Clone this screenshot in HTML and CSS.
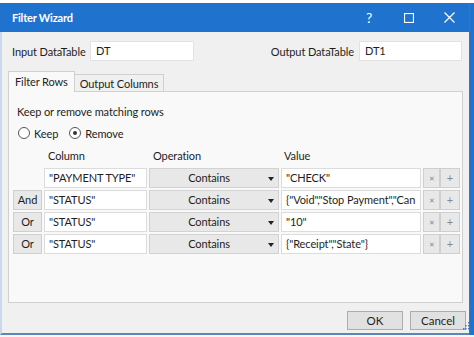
FILE: index.html
```html
<!DOCTYPE html>
<html lang="en">
<head>
    <meta charset="UTF-8">
    <meta name="viewport" content="width=device-width, initial-scale=1.0">
    <title>Filter Wizard</title>
    <link rel="stylesheet" href="styles.css">
</head>
<body>
    <div class="screen">
        <div class="dialog">
            <div class="titlebar">
                <span class="title">Filter Wizard</span>
                <div class="controls">
                    <span class="ctl">?</span>
                    <span class="ctl">
                        <svg width="10" height="10" viewBox="0 0 10 10"><rect x="0.5" y="0.5" width="9" height="9" fill="none" stroke="#fff" stroke-width="1.2"/></svg>
                    </span>
                    <span class="ctl">
                        <svg width="11" height="11" viewBox="0 0 11 11"><path d="M0.5 0.5 L10.5 10.5 M10.5 0.5 L0.5 10.5" stroke="#fff" stroke-width="1.2"/></svg>
                    </span>
                </div>
            </div>
            <div class="content">
                <div class="tables-row">
                    <label class="field-label in-label">Input DataTable</label>
                    <div class="field in-field">DT</div>
                    <div class="spacer"></div>
                    <label class="field-label">Output DataTable</label>
                    <div class="field out-field">DT1</div>
                </div>
                <div class="tabs">
                    <div class="tab active">Filter Rows</div>
                    <div class="tab">Output Columns</div>
                </div>
                <div class="panel">
                    <div class="caption">Keep or remove matching rows</div>
                    <div class="radios">
                        <span class="radio"></span><span class="radio-text">Keep</span>
                        <span class="radio checked"></span><span class="radio-text">Remove</span>
                    </div>
                    <div class="row head">
                        <span></span>
                        <span class="h-col">Column</span>
                        <span class="h-op">Operation</span>
                        <span class="h-val">Value</span>
                    </div>
                    <div class="row">
                        <span></span>
                        <div class="box">"PAYMENT TYPE"</div>
                        <div class="op">Contains<span class="arrow"></span></div>
                        <div class="box">"CHECK"</div>
                        <div class="mini">&#x2715;</div>
                        <div class="mini plus">+</div>
                    </div>
                    <div class="row">
                        <div class="logic">And</div>
                        <div class="box">"STATUS"</div>
                        <div class="op">Contains<span class="arrow"></span></div>
                        <div class="box">{"Void","Stop Payment","Can</div>
                        <div class="mini">&#x2715;</div>
                        <div class="mini plus">+</div>
                    </div>
                    <div class="row">
                        <div class="logic">Or</div>
                        <div class="box">"STATUS"</div>
                        <div class="op">Contains<span class="arrow"></span></div>
                        <div class="box">"10"</div>
                        <div class="mini">&#x2715;</div>
                        <div class="mini plus">+</div>
                    </div>
                    <div class="row">
                        <div class="logic">Or</div>
                        <div class="box">"STATUS"</div>
                        <div class="op">Contains<span class="arrow"></span></div>
                        <div class="box">{"Receipt","State"}</div>
                        <div class="mini">&#x2715;</div>
                        <div class="mini plus">+</div>
                    </div>
                </div>
                <div class="footer">
                    <button class="btn">OK</button>
                    <button class="btn">Cancel</button>
                    <span class="grip">
                        <svg width="7" height="8" viewBox="0 0 7 8" fill="#4a78b0"><rect x="5" y="0" width="1.5" height="1.5"/><rect x="5" y="3" width="1.5" height="1.5"/><rect x="2" y="3" width="1.5" height="1.5"/><rect x="5" y="6" width="1.5" height="1.5"/><rect x="2" y="6" width="1.5" height="1.5"/><rect x="0" y="6" width="1.5" height="1.5"/></svg>
                    </span>
                </div>
            </div>
        </div>
        <div class="side"></div>
    </div>
    <div class="below"></div>
</body>
</html>
```

FILE: styles.css
```css
body {
    margin: 0;
    background: #ffffff;
    font-family: Lato, "Noto Sans", sans-serif;
    font-size: 11px;
    letter-spacing: -0.1px;
    color: #1e1e1e;
    width: 474px;
    height: 337px;
    overflow: hidden;
}
.screen {
    display: flex;
    padding-top: 3px;
}
.dialog {
    width: 467px;
    border-left: 2px solid #c9d8ea;
    border-bottom: 2px solid #5b86b8;
    background: #f0f0f0;
    display: flex;
    flex-direction: column;
}
.side {
    flex: 1;
    background: #1f73cf;
    border-left: 1px solid #5e6f85;
}
.titlebar {
    height: 29px;
    background: #1f73cf;
    display: flex;
    align-items: center;
    color: #fff;
    margin-left: -2px;
}
.title {
    padding-left: 12px;
    font-size: 11px;
    font-weight: 700;
    letter-spacing: -0.2px;
    flex: 1;
}
.controls {
    display: flex;
}
.ctl {
    width: 40px;
    display: flex;
    justify-content: center;
    align-items: center;
    font-size: 14px;
    height: 29px;
}
.content {
    padding: 9px 3px 3px 6px;
    display: flex;
    flex-direction: column;
}
.tables-row {
    display: flex;
    align-items: center;
    height: 20px;
    padding-right: 4px;
}
.field-label {
    padding-left: 4px;
    margin-right: 5px;
    white-space: nowrap;
}
.in-label {
    width: 73px;
    flex: none;
}
.field {
    height: 18px;
    line-height: 18px;
    background: #fff;
    border: 1px solid #e2e2e2;
    padding-left: 5px;
    box-sizing: content-box;
}
.in-field {
    width: 97px;
}
.out-field {
    width: 96px;
}
.spacer {
    flex: 1;
}
.tabs {
    display: flex;
    align-items: flex-end;
    margin-top: 11px;
    margin-bottom: -1px;
    height: 20px;
}
.tab {
    border: 1px solid #d0d0d0;
    border-bottom: none;
    height: 17px;
    line-height: 17px;
    padding: 0 5px;
    background: #f0f0f0;
}
.tab.active {
    height: 20px;
    line-height: 20px;
    background: #f9f9f9;
    position: relative;
    z-index: 1;
    padding: 0 6px;
}
.tab + .tab {
    border-left: none;
}
.panel {
    width: 449px;
    height: 210px;
    background: #f9f9f9;
    border: 1px solid #d0d0d0;
    padding-left: 4px;
}
.caption {
    margin-top: 12px;
    padding-left: 4px;
    line-height: 16px;
}
.radios {
    display: flex;
    align-items: center;
    margin-top: 5px;
    height: 16px;
    padding-left: 5px;
}
.radio {
    width: 10px;
    height: 10px;
    border: 1px solid #555;
    border-radius: 50%;
    background: #fff;
    position: relative;
    margin-right: 4px;
}
.radio.checked::after {
    content: "";
    position: absolute;
    left: 3px;
    top: 3px;
    width: 4px;
    height: 4px;
    border-radius: 50%;
    background: #333;
}
.radio-text {
    margin-right: 11px;
}
.row {
    display: grid;
    grid-template-columns: 29px 103px 130px 140px 17px 18px;
    column-gap: 2px;
    height: 20px;
    margin-bottom: 2px;
}
.row.head {
    margin-top: 7px;
    margin-bottom: 4px;
    height: 16px;
    line-height: 16px;
}
.h-col {
    padding-left: 4px;
}
.h-op {
    padding-left: 4px;
}
.h-val {
    padding-left: 3px;
}
.box {
    background: #fff;
    border: 1px solid #dcdcdc;
    line-height: 18px;
    padding-left: 4px;
    white-space: nowrap;
    overflow: hidden;
    min-width: 0;
}
.logic {
    background: #e8e8e8;
    border: 1px solid #cfcfcf;
    text-align: center;
    line-height: 18px;
}
.op {
    background: #e8e8e8;
    border: 1px solid #d2d2d2;
    line-height: 18px;
    text-align: center;
    position: relative;
    padding-left: 4px;
    padding-right: 14px;
}
.arrow {
    position: absolute;
    right: 4px;
    top: 8px;
    border-left: 3px solid transparent;
    border-right: 3px solid transparent;
    border-top: 4px solid #222;
}
.mini {
    background: #e8e8e8;
    border: 1px solid #cfcfcf;
    color: #888;
    font-size: 7px;
    text-align: center;
    line-height: 18px;
}
.mini.plus {
    font-size: 11px;
    margin-left: -2px;
}
.footer {
    display: flex;
    justify-content: flex-end;
    gap: 7px;
    margin-top: 8px;
    position: relative;
}
.btn {
    height: 19px;
    width: 56px;
    background: #e1e1e1;
    border: 1px solid #adadad;
    font-family: inherit;
    font-size: 11.5px;
    color: #1e1e1e;
    padding: 0;
}
.grip {
    position: absolute;
    right: -4px;
    bottom: -2px;
}
.below {
    height: 3px;
    background: #f7f7f7;
}
```
